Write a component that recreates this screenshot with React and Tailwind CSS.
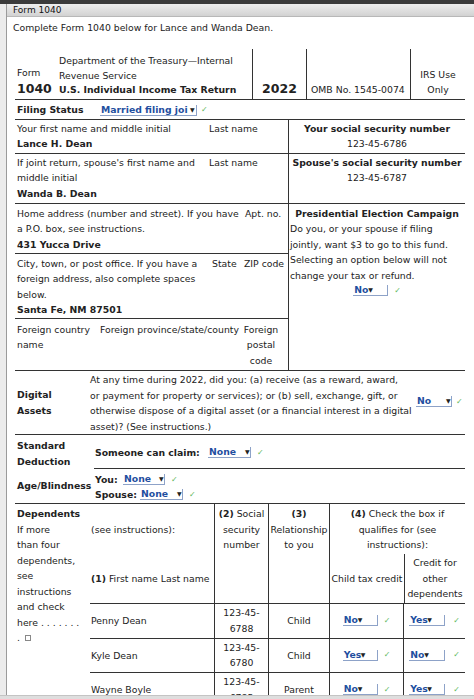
import React from 'react';

const L = 'border-[#333]';

function Sel({ label, box, arrow, check = 'ml-[6px]' }) {
    return (
        <span className="inline-flex items-center">
            <span className={`relative inline-block h-[11px] border-b-[1.5px] border-r border-[#8da2c8] font-bold leading-[10px] text-[#1f4fa0] ${box}`}>
                <span className="pl-[1px]">{label}</span>
                <span className={`absolute top-[1px] text-[6px] leading-[8px] text-[#222] ${arrow}`}>▼</span>
            </span>
            <span className={`text-[8px] leading-none text-[#5cb85c] ${check}`}>✓</span>
        </span>
    );
}

function Lines({ items, className = '' }) {
    return (
        <div className={className}>
            {items.map((t, i) => (
                <div key={i} className="whitespace-nowrap">{t}</div>
            ))}
        </div>
    );
}

const dependents = [
    { name: 'Penny Dean', ssn: ['123-45-', '6788'], rel: 'Child', ctc: 'No', odc: 'Yes' },
    { name: 'Kyle Dean', ssn: ['123-45-', '6780'], rel: 'Child', ctc: 'Yes', odc: 'No' },
    { name: 'Wayne Boyle', ssn: ['123-45-', '6785'], rel: 'Parent', ctc: 'No', odc: 'Yes' },
];

function DepRow({ d }) {
    return (
        <div className={`flex h-[34.5px] border-b-[1.5px] ${L}`}>
            <div className="flex w-[124px] items-center pl-[1px]">{d.name}</div>
            <div className={`flex w-[54px] flex-col items-center justify-center border-l ${L}`}>
                <span>{d.ssn[0]}</span>
                <span>{d.ssn[1]}</span>
            </div>
            <div className={`flex w-[61px] items-center justify-center border-l ${L}`}>{d.rel}</div>
            <div className={`flex w-[74px] items-center justify-center border-l ${L}`}>
                <Sel label={d.ctc} box="w-[35px]" arrow={d.ctc === 'No' ? 'left-[15px]' : 'left-[18px]'} />
            </div>
            <div className={`flex flex-1 items-center justify-center border-l ${L}`}>
                <Sel label={d.odc} box="w-[36px]" arrow={d.odc === 'No' ? 'left-[15px]' : 'left-[18px]'} check="ml-[8px]" />
            </div>
        </div>
    );
}

export default function App() {
    return (
        <div className="relative h-[699px] w-full overflow-hidden bg-[#ececec] font-['DejaVu_Sans',Verdana,sans-serif] text-[9.3px] leading-[15.5px] text-[#222]">
            <div className="h-[4px] bg-[#3b3b3b]" />
            <div className="ml-[6px] h-[695px] border-l border-[#9b9b9b] bg-white">
                {/* title bar */}
                <div className="flex h-[13px] items-center border-b border-[#b8b8b8] bg-gradient-to-b from-[#eeeeee] to-[#d2d2d2] pl-[6px] text-[9px] leading-none text-[#111]">
                    Form 1040
                </div>

                <div className="pl-[8px] pr-[9px] pt-[3px]">
                    <p className="-ml-[2px]">Complete Form 1040 below for Lance and Wanda Dean.</p>

                    {/* header */}
                    <div className={`mt-[13px] flex h-[51px] border-b-[1.5px] ${L}`}>
                        <div className="flex w-[42px] flex-col justify-end pb-[1px] pl-[2px]">
                            <span className="leading-[14px]">Form</span>
                            <span className="text-[12.5px] font-bold leading-[18px]">1040</span>
                        </div>
                        <div className="flex w-[195px] flex-col justify-end pb-[1px] pl-[2px] leading-[14.5px]">
                            <span>Department of the Treasury—Internal</span>
                            <span>Revenue Service</span>
                            <span className="font-bold">U.S. Individual Income Tax Return</span>
                        </div>
                        <div className={`flex w-[54px] flex-col items-center justify-end border-l ${L} pb-[1px] text-[12.5px] font-bold leading-[18px]`}>
                            2022
                        </div>
                        <div className={`flex w-[104px] flex-col justify-end border-l ${L} pb-[1px] pl-[4px] leading-[14.5px]`}>
                            OMB No. 1545-0074
                        </div>
                        <div className={`flex flex-1 flex-col items-center justify-end border-l ${L} pb-[1px] leading-[15.5px]`}>
                            <span>IRS Use</span>
                            <span>Only</span>
                        </div>
                    </div>

                    {/* filing status */}
                    <div className={`flex h-[20px] items-center border-b-[1.5px] ${L} pl-[2px] pt-[2px]`}>
                        <span className="w-[83px] font-bold">Filing Status</span>
                        <Sel label="Married filing joi" box="w-[97px]" arrow="left-[90px]" check="ml-[4px]" />
                    </div>

                    {/* names */}
                    <div className={`flex h-[34px] border-b-[1.5px] ${L}`}>
                        <div className="flex w-[273px] pl-[2px] pt-[1px]">
                            <Lines className="w-[192px]" items={['Your first name and middle initial', <b>Lance H. Dean</b>]} />
                            <span>Last name</span>
                        </div>
                        <div className={`flex-1 border-l ${L} pt-[1px] text-center`}>
                            <div className="font-bold">Your social security number</div>
                            <div>123-45-6786</div>
                        </div>
                    </div>
                    <div className={`flex h-[50px] border-b-[1.5px] ${L}`}>
                        <div className="flex w-[273px] pl-[2px] pt-[1px]">
                            <Lines className="w-[192px]" items={["If joint return, spouse's first name and", 'middle initial', <b>Wanda B. Dean</b>]} />
                            <span>Last name</span>
                        </div>
                        <div className={`flex-1 border-l ${L} pt-[1px] text-center`}>
                            <div className="font-bold">Spouse's social security number</div>
                            <div>123-45-6787</div>
                        </div>
                    </div>

                    {/* address block */}
                    <div className={`flex border-b-[1.5px] ${L}`}>
                        <div className="w-[273px]">
                            <div className={`flex h-[50px] border-b-[1.5px] ${L} pl-[2px] pt-[2px]`}>
                                <Lines className="w-[228px]" items={['Home address (number and street). If you have', 'a P.O. box, see instructions.', <b>431 Yucca Drive</b>]} />
                                <span>Apt. no.</span>
                            </div>
                            <div className={`flex h-[65px] border-b-[1.5px] ${L} pl-[2px] pt-[2px]`}>
                                <Lines className="w-[195px]" items={['City, town, or post office. If you have a', 'foreign address, also complete spaces', 'below.', <b>Santa Fe, NM 87501</b>]} />
                                <span className="w-[32px]">State</span>
                                <span className="whitespace-nowrap">ZIP code</span>
                            </div>
                            <div className="flex h-[51.5px] pl-[2px] pt-[3px]">
                                <Lines className="w-[83px]" items={['Foreign country', 'name']} />
                                <span className="w-[143px] whitespace-nowrap">Foreign province/state/county</span>
                                <Lines className="w-[36px] text-center" items={['Foreign', 'postal', 'code']} />
                            </div>
                        </div>
                        <div className={`flex-1 border-l ${L} pt-[2px]`}>
                            <div className="text-center font-bold">Presidential Election Campaign</div>
                            <Lines
                                className="pl-[1px]"
                                items={['Do you, or your spouse if filing', 'jointly, want $3 to go to this fund.', 'Selecting an option below will not', 'change your tax or refund.']}
                            />
                            <div className="flex justify-center pt-[2px]">
                                <Sel label="No" box="w-[35px]" arrow="left-[15px]" />
                            </div>
                        </div>
                    </div>

                    {/* digital assets */}
                    <div className={`flex h-[64px] border-b-[1.5px] ${L}`}>
                        <div className="flex w-[75px] flex-col justify-center pl-[2px] font-bold">
                            <span>Digital</span>
                            <span>Assets</span>
                        </div>
                        <Lines
                            className="w-[326px] pt-[1px]"
                            items={[
                                'At any time during 2022, did you: (a) receive (as a reward, award,',
                                'or payment for property or services); or (b) sell, exchange, gift, or',
                                'otherwise dispose of a digital asset (or a financial interest in a digital',
                                'asset)? (See instructions.)',
                            ]}
                        />
                        <div className="flex items-center pb-[2px]">
                            <Sel label="No" box="w-[36px]" arrow="left-[30px]" check="ml-[4px]" />
                        </div>
                    </div>

                    {/* standard deduction */}
                    <div className="flex h-[34px]">
                        <Lines className="w-[79px] pl-[2px] pt-[3px] font-bold" items={['Standard', 'Deduction']} />
                        <div className={`flex flex-1 items-center border-b-[1.5px] ${L} pl-[1px] pt-[2px]`}>
                            <span className="w-[113px] font-bold">Someone can claim:</span>
                            <Sel label="None" box="w-[43px]" arrow="left-[37px]" check="ml-[6px]" />
                        </div>
                    </div>
                    <div className={`flex h-[35px] border-b-[1.5px] ${L}`}>
                        <div className="flex w-[79px] items-center pl-[2px] font-bold">Age/Blindness</div>
                        <div className="flex flex-col justify-center pl-[1px] pt-[2px] leading-[15px]">
                            <div className="flex items-center">
                                <span className="w-[28px] font-bold">You:</span>
                                <Sel label="None" box="w-[42px]" arrow="left-[36px]" check="ml-[6px]" />
                            </div>
                            <div className="flex items-center">
                                <span className="w-[45px] font-bold">Spouse:</span>
                                <Sel label="None" box="w-[43px]" arrow="left-[37px]" check="ml-[6px]" />
                            </div>
                        </div>
                    </div>

                    {/* dependents */}
                    <div className="flex">
                        <div className="w-[75px] pl-[2px] pt-[2px]">
                            <div className="font-bold">Dependents</div>
                            <Lines items={['If more', 'than four', 'dependents,', 'see', 'instructions', 'and check', 'here . . . . . . .']} />
                            <div className="flex items-center gap-[5px]">
                                <span>.</span>
                                <span className="inline-block h-[6px] w-[6px] border border-[#888]" />
                            </div>
                        </div>
                        <div className="flex-1">
                            <div className={`flex h-[100px] border-b-[1.5px] ${L}`}>
                                <div className="w-[124px] pl-[1px] pt-[2px]">
                                    <div className="mt-[15.5px]">(see instructions):</div>
                                    <div className="mt-[34px] whitespace-nowrap"><b>(1)</b> First name Last name</div>
                                </div>
                                <Lines
                                    className={`w-[54px] border-l ${L} pt-[2px] text-center`}
                                    items={[<span><b>(2)</b> Social</span>, 'security', 'number']}
                                />
                                <Lines
                                    className={`w-[61px] border-l ${L} pt-[2px] text-center`}
                                    items={[<b>(3)</b>, 'Relationship', 'to you']}
                                />
                                <div className={`flex flex-1 flex-col border-l ${L}`}>
                                    <Lines
                                        className="h-[50px] pt-[2px] text-center"
                                        items={[<span><b>(4)</b> Check the box if</span>, 'qualifies for (see', 'instructions):']}
                                    />
                                    <div className="flex flex-1">
                                        <div className="flex w-[74px] items-center justify-center whitespace-nowrap">Child tax credit</div>
                                        <div className={`flex flex-1 flex-col items-center justify-center border-l ${L}`}>
                                            <span>Credit for</span>
                                            <span>other</span>
                                            <span>dependents</span>
                                        </div>
                                    </div>
                                </div>
                            </div>
                            {dependents.map((d) => (
                                <DepRow key={d.name} d={d} />
                            ))}
                        </div>
                    </div>
                </div>
            </div>
            <div className="absolute bottom-0 left-0 right-0 h-[4px] border-t border-[#c4c4c4] bg-[#dedede]" />
        </div>
    );
}
